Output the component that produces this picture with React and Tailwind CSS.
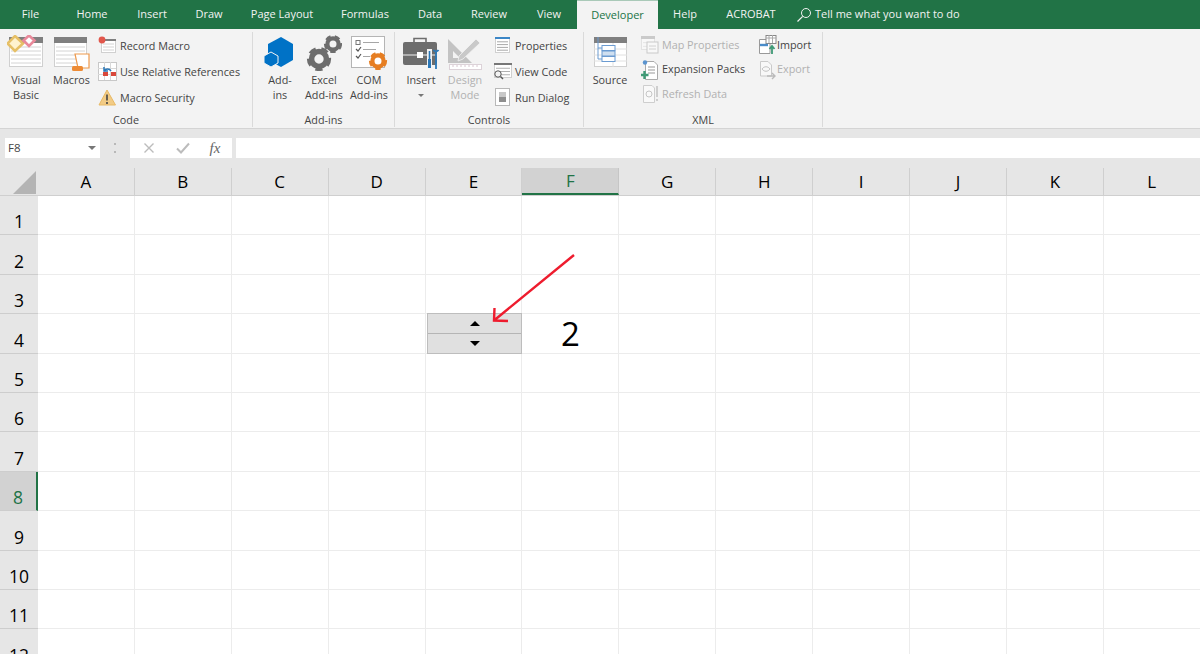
import React from "react";

const tabs = [
  ["File", "w-[61px]"],
  ["Home", "w-[62px]"],
  ["Insert", "w-[58px]"],
  ["Draw", "w-[56px]"],
  ["Page Layout", "w-[90px]"],
  ["Formulas", "w-[76px]"],
  ["Data", "w-[54px]"],
  ["Review", "w-[64px]"],
  ["View", "w-[56px]"],
];

const columns = ["A", "B", "C", "D", "E", "F", "G", "H", "I", "J", "K", "L"];
const rows = [1, 2, 3, 4, 5, 6, 7, 8, 9, 10, 11, 12];

// teeth are a dashed circle, good enough at this size
const Gear = ({ cx, cy, r, color }) => (
  <g fill="none" stroke={color}>
    <circle cx={cx} cy={cy} r={r * 0.62} strokeWidth={r * 0.46} />
    <circle cx={cx} cy={cy} r={r * 0.88} strokeWidth={r * 0.26} strokeDasharray={`${r * 0.6} ${r * 0.48}`} />
  </g>
);

const Sheet = ({ x, y, w, h, head = "#7f7f7f", headH = 6, lines = 4, line = "#d4d4d4", opacity = 1 }) => (
  <g opacity={opacity}>
    <rect x={x + 0.5} y={y + 0.5} width={w - 1} height={h - 1} fill="#fff" stroke="#d0d0d0" />
    <rect x={x} y={y} width={w} height={headH} fill={head} />
    {Array.from({ length: lines }).map((_, i) => {
      const ly = y + headH + ((h - headH) / (lines + 1)) * (i + 1);
      return <path key={i} d={`M${x + 2} ${ly}H${x + w - 2}`} stroke={line} strokeWidth="1" />;
    })}
  </g>
);

const VisualBasicIcon = () => (
  <svg width="38" height="36" viewBox="0 0 38 36">
    <Sheet x={2} y={2} w={34} h={30} lines={5} />
    <path d="M8 1L16 8.5L8 16L0.5 8.5Z" fill="#fff3d0" stroke="#e6c067" strokeWidth="2.6" />
    <path d="M22 0.5L27.5 5.5L22 11L16.5 5.5Z" fill="#fff" stroke="#e8899a" strokeWidth="2.6" />
  </svg>
);

const MacrosIcon = () => (
  <svg width="38" height="36" viewBox="0 0 38 36">
    <Sheet x={1} y={2} w={33} h={30} lines={5} />
    <path d="M22 19H36V33H25Z" fill="#fff" stroke="#ee9a4d" strokeWidth="1.2" />
    <rect x="19" y="31" width="11" height="5" rx="1.5" fill="#ed8b35" />
  </svg>
);

const AddinsIcon = () => (
  <svg width="34" height="36" viewBox="0 0 34 36">
    <path d="M18 2L30 9V25L18 32L5 25V9Z" fill="#0072c6" />
    <path d="M8 17L15 21V28L8 32L1 28V21Z" fill="#0072c6" stroke="#f3f3f3" strokeWidth="1" />
  </svg>
);

const ExcelAddinsIcon = () => (
  <svg width="36" height="36" viewBox="0 0 36 36">
    <Gear cx={13} cy={24} r={12} color="#6d6d6d" />
    <Gear cx={27} cy={9} r={9} color="#6d6d6d" />
  </svg>
);

const ComIcon = () => (
  <svg width="38" height="36" viewBox="0 0 38 36">
    <rect x="1.5" y="1.5" width="33" height="31" fill="#fff" stroke="#b5b5b5" />
    <rect x="6" y="5.5" width="4" height="4" fill="none" stroke="#777" />
    <path d="M13 7.5H29M13 14.5H26M13 21.5H20" stroke="#a6a6a6" />
    <path d="M6 14l2 2 3-4M6 21l2 2 3-4" fill="none" stroke="#555" strokeWidth="1.2" />
    <Gear cx={28} cy={26} r={9} color="#e67e22" />
  </svg>
);

const InsertIcon = () => (
  <svg width="38" height="36" viewBox="-1 0 38 36">
    <path d="M11 7V3.5H23V7" fill="none" stroke="#6d6d6d" strokeWidth="1.6" />
    <path d="M0 9a2 2 0 012-2h30a2 2 0 012 2v10.5H0Z" fill="#6d6d6d" />
    <path d="M0 20.5H34V28a2 2 0 01-2 2H2a2 2 0 01-2-2Z" fill="#6d6d6d" />
    <rect x="14" y="17" width="6" height="6" fill="#fff" />
    <rect x="24" y="14" width="5" height="22" fill="#f3f3f3" />
    <path d="M26.5 16V24" stroke="#2b78b8" strokeWidth="1.6" />
    <rect x="25" y="24" width="3" height="9" fill="#2b78b8" />
    <path d="M33 17v8M30.5 15a3 3 0 005 0" fill="none" stroke="#2b78b8" strokeWidth="1.8" />
    <path d="M33 25v9" stroke="#2b78b8" strokeWidth="1.8" />
  </svg>
);

const DesignModeIcon = () => (
  <svg width="38" height="36" viewBox="0 0 38 36">
    <path d="M2 4V28H26ZM7 16V23H14Z" fill="#c3c3c3" fillRule="evenodd" />
    <path d="M13 21L30 4L34 8L17 24L12 26Z" fill="#c9c9c9" stroke="#f3f3f3" strokeWidth="0.8" />
    <rect x="3.5" y="29.5" width="32" height="5" fill="#fff" stroke="#dcd2d8" />
    <path d="M7 30v2M11 30v2M15 30v2M19 30v2M23 30v2M27 30v2M31 30v2" stroke="#d8c8d0" />
  </svg>
);

const SourceIcon = () => (
  <svg width="36" height="36" viewBox="-1 0 36 36">
    <Sheet x={1} y={2} w={33} h={30} lines={0} />
    <path d="M20 8V32M1 14H34M1 20H34M1 26H34" stroke="#e0e0e0" />
    <path d="M5 2V24H9M5 13H9" fill="none" stroke="#6b9bd1" />
    <rect x="9" y="10.5" width="13" height="5" fill="#fff" stroke="#6b9bd1" />
    <rect x="9" y="16" width="13" height="5" fill="#cfdff0" stroke="#6b9bd1" />
    <rect x="9" y="21.5" width="13" height="5" fill="#fff" stroke="#6b9bd1" />
  </svg>
);

const small = {
  record: (
    <>
      <Sheet x={3} y={3} w={15} h={14} head="#7f7f7f" headH={2} lines={3} />
      <circle cx="4" cy="4" r="3.4" fill="#e2574c" />
    </>
  ),
  relative: (
    <>
      <rect x="0.5" y="0.5" width="18" height="18" fill="#fff" stroke="#c8c8c8" />
      <path d="M6.5 0V18M12.5 0V18M0 6.5H18M0 12.5H18" stroke="#d8d8d8" />
      <rect x="5" y="10" width="5" height="4" fill="#d9483b" />
      <rect x="13" y="10" width="5" height="4" fill="#d9483b" />
      <path d="M13 9a4 4 0 00-7 0M6 5v4h4" fill="none" stroke="#2b78b8" strokeWidth="1.5" />
    </>
  ),
  security: (
    <>
      <path d="M9 2L17.5 17H1Z" fill="#f2cb85" stroke="#e8b964" />
      <path d="M9 6.5V12.5M9 14V16" stroke="#444" strokeWidth="1.6" />
    </>
  ),
  properties: <Sheet x={2} y={1} w={15} h={16} head="#3b86c6" headH={2} lines={4} line="#a8a8a8" />,
  viewcode: (
    <>
      <Sheet x={1} y={1} w={18} h={15} head="#777" headH={2} lines={3} line="#b0b0b0" />
      <circle cx="5" cy="12" r="3.2" fill="#f3f3f3" stroke="#555" />
      <path d="M7.5 14.5L10 17" stroke="#555" strokeWidth="1.4" />
    </>
  ),
  rundialog: (
    <>
      <rect x="2.5" y="0.5" width="14" height="17" fill="#fff" stroke="#b8b8b8" />
      <rect x="6" y="4" width="7" height="5" fill="#c8c8c8" />
      <rect x="6" y="9" width="7" height="5" fill="#8f8f8f" />
    </>
  ),
  map: (
    <g opacity="0.45">
      <Sheet x={1} y={1} w={14} h={14} head="#999" headH={3} lines={2} />
      <rect x="7" y="7" width="11" height="11" fill="#fff" stroke="#999" />
      <path d="M9 11H16M9 14H16" stroke="#aaa" />
    </g>
  ),
  expansion: (
    <>
      <path d="M5.5 1.5H14L17.5 5V19.5H5.5Z" fill="#fff" stroke="#aaa" />
      <path d="M8 7H15M8 10H15M8 13H15" stroke="#999" />
      <circle cx="5" cy="2.5" r="2.2" fill="#5b94cf" />
      <path d="M4.5 11V19M1 15H8.5" stroke="#3f9a76" strokeWidth="2.4" />
    </>
  ),
  refresh: (
    <g opacity="0.5">
      <path d="M3.5 1.5H12L14.5 4V18.5H3.5Z" fill="#fff" stroke="#aaa" />
      <circle cx="9" cy="10" r="3" fill="none" stroke="#999" />
      <path d="M17 2V13M17 15V17" stroke="#999" strokeWidth="1.6" />
    </g>
  ),
  importIcon: (
    <>
      <path d="M2.5 4.5H13V18.5H2.5Z" fill="#fff" stroke="#999" />
      <rect x="9" y="0.5" width="10" height="8" fill="#fff" stroke="#888" />
      <path d="M12 0V8M15.5 0V8M9 3H19" stroke="#aaa" />
      <path d="M3 10H11" stroke="#4a8cc9" strokeWidth="2.4" />
      <path d="M15 19V12M12.5 14L15 11L17.5 14" fill="none" stroke="#3f9a76" strokeWidth="1.8" />
    </>
  ),
  exportIcon: (
    <g opacity="0.45">
      <path d="M3.5 1.5H11L14.5 5V16H3.5Z" fill="#fff" stroke="#999" />
      <path d="M5 9c2-3 6-3 8 0c-2 3-6 3-8 0Z" fill="none" stroke="#888" />
      <path d="M10 16H18M15 13L18 16L15 19" fill="none" stroke="#777" strokeWidth="1.4" />
    </g>
  ),
};

const LargeButton = ({ icon, lines, width, disabled, caret }) => (
  <div className={`flex flex-col items-center ${width}`}>
    <div className="flex h-[36px] items-start justify-center">{icon}</div>
    <div className={`mt-[1px] text-center text-[10.8px] leading-[15px] whitespace-nowrap ${disabled ? "text-[#b1b1b1]" : "text-[#444]"}`}>
      {lines.map((l) => (
        <div key={l}>{l}</div>
      ))}
    </div>
    {caret && <div className="mt-[7px] h-0 w-0 border-x-[3px] border-t-[3px] border-x-transparent border-t-[#777]" />}
  </div>
);

const SmallButton = ({ icon, label, disabled, gap = "gap-[2px]" }) => (
  <div className={`flex items-center ${gap} whitespace-nowrap text-[10.8px] ${disabled ? "text-[#b1b1b1]" : "text-[#444]"}`}>
    <svg width="20" height="20" viewBox="0 0 20 20">
      {icon}
    </svg>
    <span>{label}</span>
  </div>
);

const Group = ({ label, width, children, className = "" }) => (
  <div className={`relative flex h-full shrink-0 flex-col border-r border-[#dadada] ${width}`}>
    <div className={`flex h-[84px] items-start ${className}`}>{children}</div>
    <div className="text-center text-[10.8px] leading-[15px] text-[#444]">{label}</div>
  </div>
);

const Ribbon = () => (
  <div className="flex h-[100px] border-b border-[#d4d4d4] bg-[#f3f3f3] pt-[3px] pb-[1px]">
    <Group label="Code" width="w-[253px]" className="pt-[3px]">
      <LargeButton width="w-[52px]" icon={<VisualBasicIcon />} lines={["Visual", "Basic"]} />
      <LargeButton width="w-[39px]" icon={<MacrosIcon />} lines={["Macros"]} />
      <div className="mt-[1px] ml-[7px] flex flex-col gap-[6px]">
        <SmallButton icon={small.record} label="Record Macro" />
        <SmallButton icon={small.relative} label="Use Relative References" />
        <SmallButton icon={small.security} label="Macro Security" />
      </div>
    </Group>
    <Group label="Add-ins" width="w-[142px]" className="pt-[3px] pl-[5px]">
      <LargeButton width="w-[44px]" icon={<AddinsIcon />} lines={["Add-", "ins"]} />
      <LargeButton width="w-[44px]" icon={<ExcelAddinsIcon />} lines={["Excel", "Add-ins"]} />
      <LargeButton width="w-[46px]" icon={<ComIcon />} lines={["COM", "Add-ins"]} />
    </Group>
    <Group label="Controls" width="w-[189px]" className="pt-[3px] pl-[4px]">
      <LargeButton width="w-[44px]" icon={<InsertIcon />} lines={["Insert"]} caret />
      <LargeButton width="w-[44px]" icon={<DesignModeIcon />} lines={["Design", "Mode"]} disabled />
      <div className="mt-[1px] ml-[6px] flex flex-col gap-[6px]">
        <SmallButton icon={small.properties} label="Properties" />
        <SmallButton icon={small.viewcode} label="View Code" />
        <SmallButton icon={small.rundialog} label="Run Dialog" />
      </div>
    </Group>
    <Group label="XML" width="w-[239px]" className="pt-[3px] pl-[8px]">
      <LargeButton width="w-[36px]" icon={<SourceIcon />} lines={["Source"]} />
      <div className="ml-[12px] flex w-[117px] flex-col gap-[4.5px]">
        <SmallButton icon={small.map} label="Map Properties" disabled />
        <SmallButton icon={small.expansion} label="Expansion Packs" />
        <SmallButton icon={small.refresh} label="Refresh Data" disabled />
      </div>
      <div className="flex flex-col gap-[4.5px]">
        <SmallButton icon={small.importIcon} label="Import" gap="gap-0" />
        <SmallButton icon={small.exportIcon} label="Export" disabled gap="gap-0" />
      </div>
    </Group>
  </div>
);

const FormulaBar = () => (
  <div className="flex h-[30px] items-end gap-[1px] bg-[#e6e6e6] pb-[1px]">
    <div className="ml-[5px] flex h-[20px] w-[95px] items-center justify-between bg-white pr-[4px] pl-[3px] text-[11.5px] text-[#444]">
      F8
      <span className="h-0 w-0 border-x-[4px] border-t-[4px] border-x-transparent border-t-[#777]" />
    </div>
    <div className="flex h-[20px] w-[28px] items-center justify-center pr-[1px]">
      <span className="h-[10px] w-[2px] border-y-[2px] border-[#b8b8b8]" />
    </div>
    <div className="flex h-[20px] w-[102px] items-center justify-around bg-white px-[2px] text-[#b5b5b5]">
      <svg width="14" height="14" viewBox="0 0 14 14">
        <path d="M2.5 2.5L11.5 11.5M11.5 2.5L2.5 11.5" stroke="#bcbcbc" strokeWidth="1.4" />
      </svg>
      <svg width="16" height="14" viewBox="0 0 16 14">
        <path d="M2 7.5L6 11.5L14 2.5" fill="none" stroke="#bcbcbc" strokeWidth="2" />
      </svg>
      <span className="font-['Liberation_Serif',serif] text-[15px] text-[#666] italic">fx</span>
    </div>
    <div className="ml-[3px] h-[20px] flex-1 bg-white" />
  </div>
);

const ColumnHeader = () => (
  <div className="grid h-[36px] grid-cols-[38px_repeat(12,96.9px)] bg-[#e6e6e6] pt-[9px]">
    <div className="flex items-start justify-end pt-[3px] pr-[2px]">
      <svg width="23" height="23" viewBox="0 0 23 23">
        <path d="M23 0V23H0Z" fill="#b4b4b4" />
      </svg>
    </div>
    {columns.map((c) => (
      <div
        key={c}
        className={`flex items-center justify-center border-r text-[17px] leading-none ${
          c === "F"
            ? "border-r-[#c6c6c6] border-b-2 border-b-[#217346] bg-[#d2d2d2] text-[#217346]"
            : "border-r-[#cfcfcf] text-black"
        }`}
      >
        {c}
      </div>
    ))}
  </div>
);

const SheetGrid = () => (
  <div className="grid auto-rows-[39.4px] grid-cols-[38px_repeat(12,96.9px)] border-t border-[#cfcfcf]">
    {rows.map((r) => (
      <React.Fragment key={r}>
        <div
          className={`flex items-end justify-center border-b border-[#cdcdcd] pb-[1px] text-[17.5px] leading-[24px] ${
            r === 8 ? "border-r-2 border-r-[#217346] bg-[#d2d2d2] text-[#217346]" : "bg-[#e6e6e6] text-black"
          }`}
        >
          {r}
        </div>
        {columns.map((c) => (
          <div key={c} className="flex items-center justify-center border-r border-b border-[#ececec] bg-white">
            {c === "F" && r === 4 && <span className="text-[33px] leading-none text-black">2</span>}
          </div>
        ))}
      </React.Fragment>
    ))}
  </div>
);

const App = () => (
  <div className="relative h-[654px] w-[1200px] overflow-hidden bg-white font-['Open_Sans',sans-serif]">
    <div className="flex h-[29px] items-stretch bg-[#217346] text-[11px] text-[#f2f2f2]">
      {tabs.map(([t, w]) => (
        <div key={t} className={`flex items-center justify-center ${w}`}>
          {t}
        </div>
      ))}
      <div className="flex w-[81px] items-center justify-center border-t border-[#a9c9b8] bg-[#f3f3f3] text-[#217346]">Developer</div>
      <div className="flex w-[54px] items-center justify-center">Help</div>
      <div className="flex w-[78px] items-center justify-center">ACROBAT</div>
      <div className="ml-[6px] flex items-center gap-[3px]">
        <svg width="16" height="16" viewBox="0 0 16 16">
          <circle cx="10" cy="6" r="4.5" fill="none" stroke="#f2f2f2" />
          <path d="M6.7 9.3L1.5 14.5" stroke="#f2f2f2" strokeWidth="1.2" />
        </svg>
        <span>Tell me what you want to do</span>
      </div>
    </div>
    <Ribbon />
    <FormulaBar />
    <ColumnHeader />
    <SheetGrid />

    {/* spin button sitting on top of E4 */}
    <div className="absolute top-[313px] left-[427px] flex h-[41px] w-[95px] flex-col border border-[#bdbdbd] bg-[#e0e0e0]">
      <div className="flex flex-1 items-center justify-center border-b border-[#b5b5b5]">
        <span className="h-0 w-0 border-x-[5px] border-b-[5px] border-x-transparent border-b-black" />
      </div>
      <div className="flex flex-1 items-center justify-center">
        <span className="h-0 w-0 border-x-[5px] border-t-[5px] border-x-transparent border-t-black" />
      </div>
    </div>

    {/* red annotation arrow */}
    <svg className="absolute top-[250px] left-[485px]" width="95" height="78" viewBox="0 0 95 78">
      <path d="M89 5L9 70.5M9.5 58L9 70.5L23 71" fill="none" stroke="#ee1c2e" strokeWidth="2.4" />
    </svg>
  </div>
);

export default App;
